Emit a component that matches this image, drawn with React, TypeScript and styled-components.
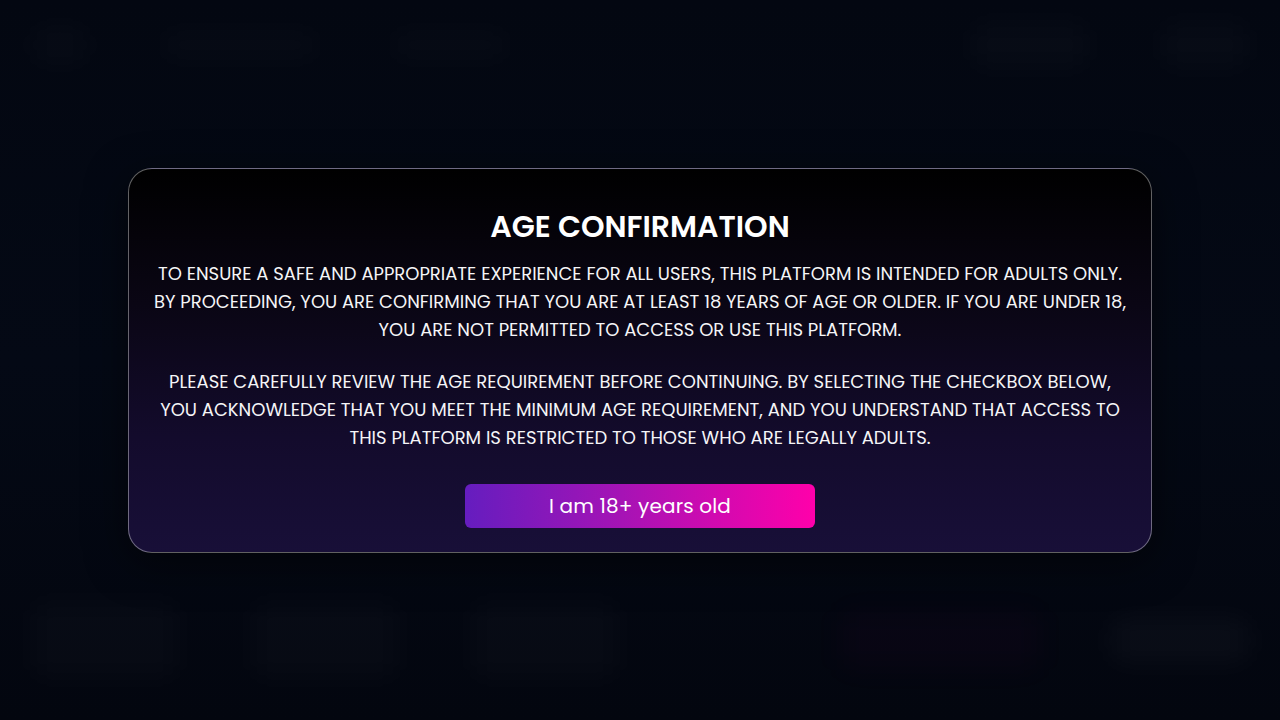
import React from "react";
import styled, { createGlobalStyle } from "styled-components";

const Global = createGlobalStyle`
  html, body { margin: 0; padding: 0; background: #030711; }
  body { font-family: "Poppins", Inter, "Noto Sans", sans-serif; }
  #root { width: 1280px; height: 720px; overflow: hidden; }
`;

const Page = styled.div`
  position: relative;
  width: 1280px;
  height: 720px;
  background: linear-gradient(180deg, #030711 0%, #040915 50%, #03060f 100%);
  overflow: hidden;
`;

const Backdrop = styled.div`
  display: flex;
  flex-direction: column;
  justify-content: space-between;
  height: 100%;
  padding: 20px 30px 40px;
  box-sizing: border-box;
  filter: blur(14px);
`;

const BackRow = styled.div`
  display: flex;
  gap: 70px;
  align-items: center;
`;

const Spacer = styled.div`
  flex: 1;
`;

const Ghost = styled.div<{ $w: number; $h: number; $tint?: string }>`
  width: ${(p) => p.$w}px;
  height: ${(p) => p.$h}px;
  border-radius: 10px;
  background: ${(p) => p.$tint ?? "rgba(255,255,255,0.018)"};
`;

const Overlay = styled.div`
  position: absolute;
  inset: 0;
  display: flex;
  align-items: center;
  justify-content: center;
`;

const Card = styled.div`
  width: 1024px;
  box-sizing: border-box;
  padding: 36px 24px 24px;
  border-radius: 24px;
  border: 1px solid rgba(255, 255, 255, 0.38);
  background: linear-gradient(180deg, #000000 0%, #0a0614 35%, #130b2c 70%, #180f38 100%);
  box-shadow: 0 10px 40px rgba(0, 0, 0, 0.5);
  display: flex;
  flex-direction: column;
  align-items: center;
  text-align: center;
`;

const Title = styled.h1`
  margin: 0 0 11px;
  font-size: 30px;
  line-height: 44px;
  font-weight: 600;
  color: #ffffff;
`;

const Para = styled.p`
  margin: 0 0 24px;
  font-size: 18px;
  line-height: 28px;
  font-weight: 400;
  color: #f5f5f7;
  text-transform: uppercase;
`;

const Button = styled.button`
  margin-top: 8px;
  width: 350px;
  height: 44px;
  border: none;
  border-radius: 6px;
  background: linear-gradient(90deg, #651dbf 0%, #a613b5 45%, #ff00aa 100%);
  color: #ffffff;
  font-family: inherit;
  font-size: 20px;
  font-weight: 400;
  letter-spacing: 0.15px;
  cursor: pointer;
`;

export default function App() {
  return (
    <Page>
      <Global />
      <Backdrop>
        <BackRow>
          <Ghost $w={60} $h={40} />
          <Ghost $w={160} $h={30} />
          <Ghost $w={120} $h={30} />
          <Spacer />
          <Ghost $w={120} $h={50} />
          <Ghost $w={90} $h={50} />
        </BackRow>
        <BackRow>
          <Ghost $w={150} $h={80} />
          <Ghost $w={150} $h={80} />
          <Ghost $w={150} $h={80} />
          <Spacer />
          <Ghost $w={200} $h={60} $tint="rgba(255,0,170,0.025)" />
          <Ghost $w={140} $h={45} $tint="rgba(255,255,255,0.03)" />
        </BackRow>
      </Backdrop>
      <Overlay>
        <Card>
          <Title>AGE CONFIRMATION</Title>
          <Para>
            To ensure a safe and appropriate experience for all users, this platform is intended for adults only.
            By proceeding, you are confirming that you are at least 18 years of age or older. If you are under 18,
            you are not permitted to access or use this platform.
          </Para>
          <Para>
            Please carefully review the age requirement before continuing. By selecting the checkbox below,
            you acknowledge that you meet the minimum age requirement, and you understand that access to
            this platform is restricted to those who are legally adults.
          </Para>
          <Button>I am 18+ years old</Button>
        </Card>
      </Overlay>
    </Page>
  );
}
